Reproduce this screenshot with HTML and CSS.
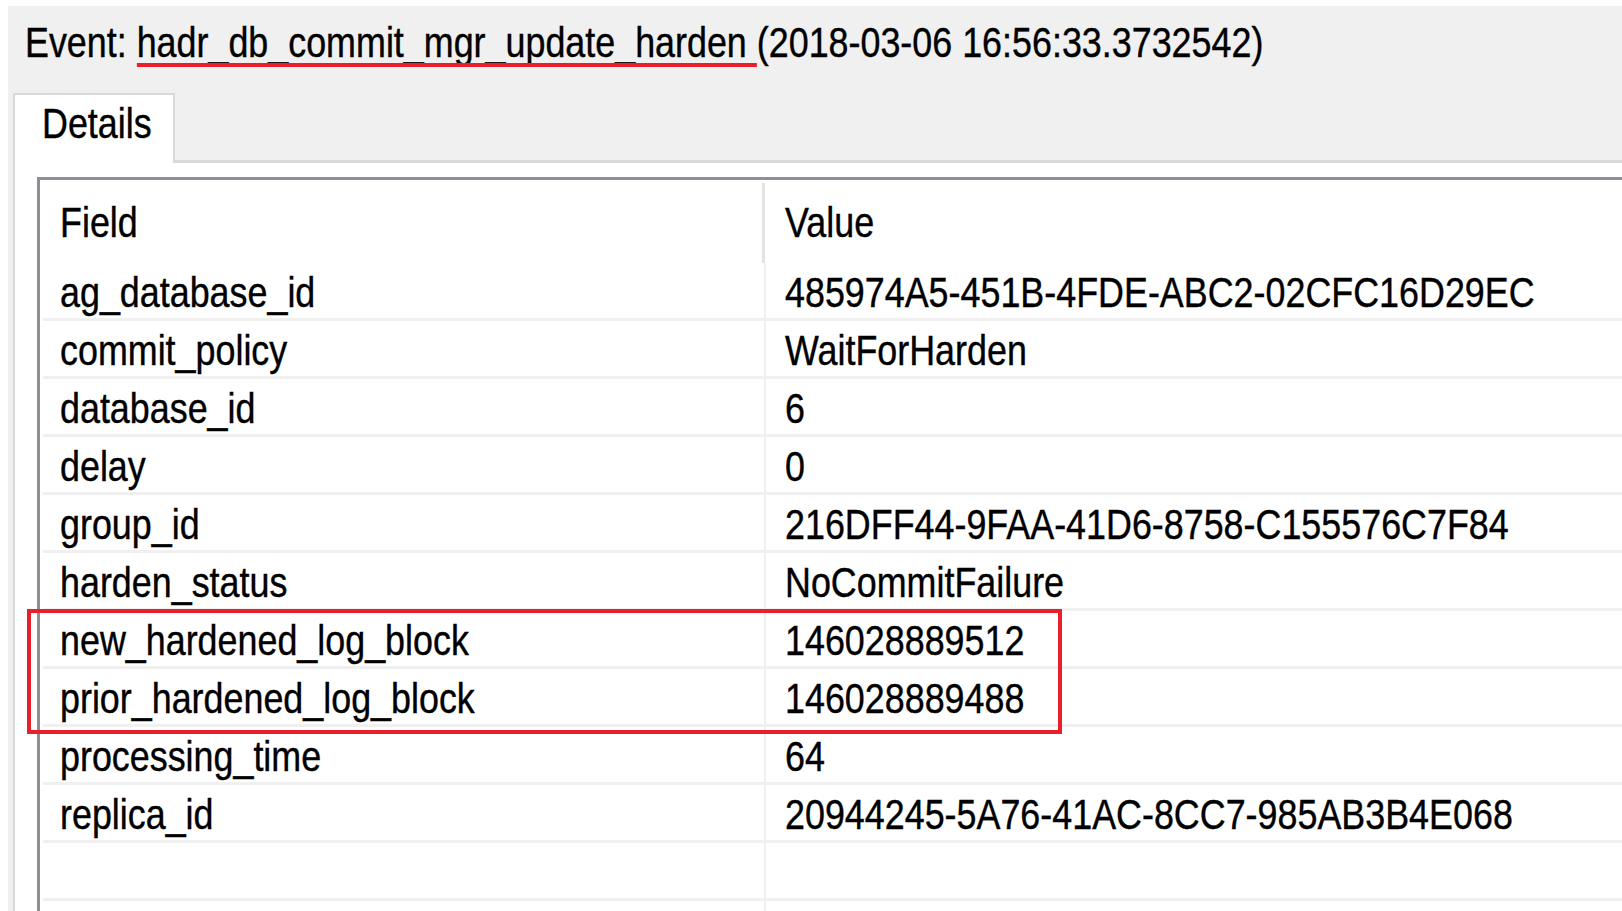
FILE: index.html
```html
<!DOCTYPE html>
<html>
<head>
<meta charset="utf-8">
<title>Event details</title>
<link rel="stylesheet" href="styles.css">
</head>
<body>
<div class="window">
  <div class="title"><span class="t">Event: <span class="mark">hadr_db_commit_mgr_update_harden </span>(2018-03-06 16:56:33.3732542)</span></div>
  <div class="tabstrip">
    <div class="tab"><span class="t">Details</span></div>
    <div class="tabfill"></div>
  </div>
  <div class="panel">
    <div class="grid">
      <div class="hrow"><div class="hc1"><span class="t">Field</span></div><div class="hc2"><span class="t">Value</span></div></div>
      <div class="row"><div class="c1"><span class="t">ag_database_id</span></div><div class="c2"><span class="t">485974A5-451B-4FDE-ABC2-02CFC16D29EC</span></div></div>
      <div class="row"><div class="c1"><span class="t">commit_policy</span></div><div class="c2"><span class="t">WaitForHarden</span></div></div>
      <div class="row"><div class="c1"><span class="t">database_id</span></div><div class="c2"><span class="t">6</span></div></div>
      <div class="row"><div class="c1"><span class="t">delay</span></div><div class="c2"><span class="t">0</span></div></div>
      <div class="row"><div class="c1"><span class="t">group_id</span></div><div class="c2"><span class="t">216DFF44-9FAA-41D6-8758-C155576C7F84</span></div></div>
      <div class="row"><div class="c1"><span class="t">harden_status</span></div><div class="c2"><span class="t">NoCommitFailure</span></div></div>
      <div class="row"><div class="c1"><span class="t">new_hardened_log_block</span></div><div class="c2"><span class="t">146028889512</span></div></div>
      <div class="row"><div class="c1"><span class="t">prior_hardened_log_block</span></div><div class="c2"><span class="t">146028889488</span></div></div>
      <div class="row"><div class="c1"><span class="t">processing_time</span></div><div class="c2"><span class="t">64</span></div></div>
      <div class="row"><div class="c1"><span class="t">replica_id</span></div><div class="c2"><span class="t">20944245-5A76-41AC-8CC7-985AB3B4E068</span></div></div>
      <div class="row"><div class="c1"></div><div class="c2"></div></div>
      <div class="row"><div class="c1"></div><div class="c2"></div></div>
    </div>
  </div>
  <div class="redbox"></div>
</div>
</body>
</html>
```
FILE: styles.css
```css
* { box-sizing: border-box; }
html, body { margin: 0; padding: 0; background: #ffffff; }
body {
  width: 1622px;
  height: 911px;
  overflow: hidden;
  font-family: "Liberation Sans", Arial, sans-serif;
  font-size: 42px;
  color: #000000;
}
.t {
  display: inline-block;
  white-space: nowrap;
  transform: scaleX(0.854);
  transform-origin: 0 50%;
  -webkit-text-stroke: 0.4px #000000;
}
.window {
  position: relative;
  margin: 6px 0 0 8px;
  height: 905px;
  background: #f0f0f0;
  overflow: hidden;
}
.title {
  height: 87px;
  padding: 11px 0 0 17px;
  line-height: 51px;
  white-space: nowrap;
}
.mark { position: relative; }
.mark::after {
  content: "";
  position: absolute;
  left: 0;
  right: 0;
  top: 44px;
  height: 4px;
  background: #e8202a;
}
.tabstrip {
  display: flex;
  height: 70px;
  margin-left: 5px;
}
.tab {
  width: 162px;
  background: #ffffff;
  border: 2px solid #d9d9d9;
  border-bottom: 0;
  padding: 3px 0 0 27px;
  line-height: 51px;
}
.tabfill {
  flex: 1;
  border-bottom: 3px solid #dadada;
}
.panel {
  height: 748px;
  margin-left: 5px;
  border-left: 2px solid #d9d9d9;
  background: #ffffff;
  padding: 14px 0 0 22px;
}
.grid {
  width: 1700px;
  height: 800px;
  border-top: 3px solid #8b9096;
  border-left: 3px solid #8b9096;
}
.hrow {
  display: flex;
  height: 83px;
}
.hc1 {
  width: 725px;
  margin-top: 3px;
  border-right: 3px solid #e3e3e3;
  padding: 14px 0 0 20px;
  line-height: 51px;
}
.hc2 {
  padding: 17px 0 0 20px;
  line-height: 51px;
}
.row {
  display: flex;
  height: 58px;
  margin-left: 3px;
  border-bottom: 3px solid #f0f0f0;
}
.c1 {
  width: 723px;
  border-right: 2px solid #f0f0f0;
  padding: 5px 0 0 17px;
  line-height: 50px;
}
.c2 {
  padding: 5px 0 0 19px;
  line-height: 50px;
}
.redbox {
  position: absolute;
  left: 19px;
  top: 603px;
  width: 1035px;
  height: 125px;
  border: 4px solid #e8202a;
}
```
